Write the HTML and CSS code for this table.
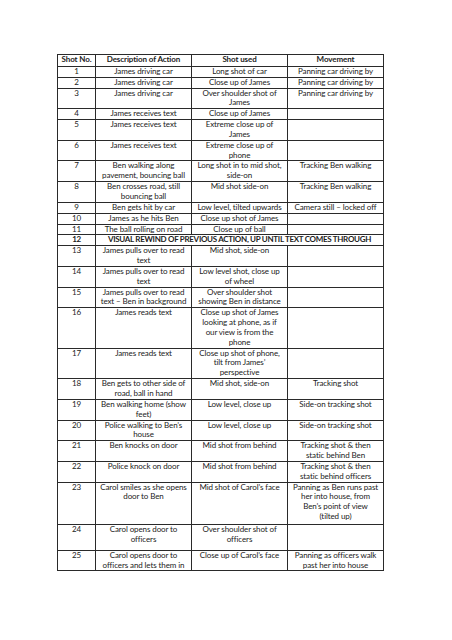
FILE: index.html
```html
<!DOCTYPE html>
<html>
<head>
<meta charset="utf-8">
<link rel="stylesheet" href="styles.css">
</head>
<body>
<div class="page">
<table class="shots">
<colgroup><col class="c-no"><col class="c-desc"><col class="c-shot"><col class="c-move"></colgroup>
<thead>
<tr><th>Shot No.</th><th>Description of Action</th><th>Shot used</th><th>Movement</th></tr>
</thead>
<tbody>
<tr><td>1</td><td>James driving car</td><td>Long shot of car</td><td>Panning car driving by</td></tr>
<tr><td>2</td><td>James driving car</td><td>Close up of James</td><td>Panning car driving by</td></tr>
<tr><td>3</td><td>James driving car</td><td>Over shoulder shot of<br>James</td><td>Panning car driving by</td></tr>
<tr><td>4</td><td>James receives text</td><td>Close up of James</td><td></td></tr>
<tr><td>5</td><td>James receives text</td><td>Extreme close up of<br>James</td><td></td></tr>
<tr><td>6</td><td>James receives text</td><td>Extreme close up of<br>phone</td><td></td></tr>
<tr><td>7</td><td>Ben walking along<br>pavement, bouncing ball</td><td>Long shot in to mid shot,<br>side-on</td><td>Tracking Ben walking</td></tr>
<tr><td>8</td><td>Ben crosses road, still<br>bouncing ball</td><td>Mid shot side-on</td><td>Tracking Ben walking</td></tr>
<tr><td>9</td><td>Ben gets hit by car</td><td>Low level, tilted upwards</td><td>Camera still – locked off</td></tr>
<tr><td>10</td><td>James as he hits Ben</td><td>Close up shot of James</td><td></td></tr>
<tr><td>11</td><td>The ball rolling on road</td><td>Close up of ball</td><td></td></tr>
<tr class="rewind"><td>12</td><td colspan="3">VISUAL REWIND OF PREVIOUS ACTION, UP UNTIL TEXT COMES THROUGH</td></tr>
<tr><td>13</td><td>James pulls over to read<br>text</td><td>Mid shot, side-on</td><td></td></tr>
<tr><td>14</td><td>James pulls over to read<br>text</td><td>Low level shot, close up<br>of wheel</td><td></td></tr>
<tr><td>15</td><td>James pulls over to read<br>text – Ben in background</td><td>Over shoulder shot<br>showing Ben in distance</td><td></td></tr>
<tr><td>16</td><td>James reads text</td><td>Close up shot of James<br>looking at phone, as if<br>our view is from the<br>phone</td><td></td></tr>
<tr><td>17</td><td>James reads text</td><td>Close up shot of phone,<br>tilt from James’<br>perspective</td><td></td></tr>
<tr><td>18</td><td>Ben gets to other side of<br>road, ball in hand</td><td>Mid shot, side-on</td><td>Tracking shot</td></tr>
<tr><td>19</td><td>Ben walking home (show<br>feet)</td><td>Low level, close up</td><td>Side-on tracking shot</td></tr>
<tr><td>20</td><td>Police walking to Ben’s<br>house</td><td>Low level, close up</td><td>Side-on tracking shot</td></tr>
<tr><td>21</td><td>Ben knocks on door</td><td>Mid shot from behind</td><td>Tracking shot &amp; then<br>static behind Ben</td></tr>
<tr><td>22</td><td>Police knock on door</td><td>Mid shot from behind</td><td>Tracking shot &amp; then<br>static behind officers</td></tr>
<tr class="roomy"><td>23</td><td>Carol smiles as she opens<br>door to Ben</td><td>Mid shot of Carol’s face</td><td>Panning as Ben runs past<br>her into house, from<br>Ben’s point of view<br>(tilted up)</td></tr>
<tr class="roomier"><td>24</td><td>Carol opens door to<br>officers</td><td>Over shoulder shot of<br>officers</td><td></td></tr>
<tr><td>25</td><td>Carol opens door to<br>officers and lets them in</td><td>Close up of Carol’s face</td><td>Panning as officers walk<br>past her into house</td></tr>
</tbody>
</table>
</div>
</body>
</html>
```

FILE: styles.css
```css
html, body {
  margin: 0;
  padding: 0;
  background: #ffffff;
}

.page {
  padding: 54px 0 0 57px;
}

.shots {
  border-collapse: collapse;
  table-layout: fixed;
  width: 326px;
  font-family: Lato, "Liberation Sans", sans-serif;
  font-size: 8px;
  letter-spacing: -0.1px;
  line-height: 9.85px;
  color: #222222;
}

.c-no { width: 38px; }
.c-desc { width: 96px; }
.c-shot { width: 96px; }
.c-move { width: 96px; }

.shots th,
.shots td {
  border: 1px solid #2a2a2a;
  padding: 0 2px;
  text-align: center;
  vertical-align: top;
  white-space: nowrap;
}

.shots th {
  font-weight: 700;
  padding-bottom: 1px;
}

.rewind td {
  font-weight: 700;
  letter-spacing: -0.3px;
}

.roomy td {
  padding-bottom: 2px;
}

.roomier td {
  padding-bottom: 5px;
}
```
